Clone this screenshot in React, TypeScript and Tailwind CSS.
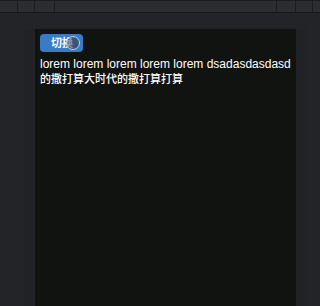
import React from "react";

const App = () => {
	const [on, setOn] = React.useState(true);

	return (
		<div className="flex h-[306px] w-[320px] flex-col bg-[#232427] font-['Liberation_Sans','Noto_Sans_CJK_SC',sans-serif]">
			<div className="flex h-[13px] shrink-0 border-t border-b border-t-[#1a1b1d] border-b-[#18191b] bg-[#2b2d31]">
				<div className="w-[18px] border-r border-[#1c1d20]" />
				<div className="w-[17px] border-r border-[#1c1d20]" />
				<div className="w-[20px] border-r border-[#1c1d20]" />
				<div className="flex-1 border-r border-[#1c1d20]" />
				<div className="w-[19px] border-r border-[#1c1d20]" />
				<div className="w-[17px] border-r border-[#1c1d20]" />
				<div className="w-[7px]" />
			</div>

			<div className="flex flex-1 pl-[24px] pr-[13px] pt-[16px]">
				<div className="flex flex-1 bg-[#212225] pl-[11px] pr-[11px]">
					<div className="flex-1 bg-[#111311] pl-[5px] pt-[5px]">
						<button
							type="button"
							onClick={() => setOn(!on)}
							className="relative flex h-[18px] w-[43px] items-center rounded-[4px] bg-[#3a7bc8] pl-[11px]">
							<span className="text-[11px] font-bold leading-none text-white">切换</span>
							<span className="absolute right-[3px] top-[2px] h-[14px] w-[14px] rounded-full border border-[#c9d3de] bg-[#2a3340]/50" />
						</button>
						<p className="mt-[5px] text-[12px] leading-[15px] text-white">
							lorem lorem lorem lorem lorem dsadasdasdasd
							<br />
							<span className="text-[11px] font-medium">的撒打算大时代的撒打算打算</span>
						</p>
					</div>
				</div>
			</div>
		</div>
	);
};

export default App;
